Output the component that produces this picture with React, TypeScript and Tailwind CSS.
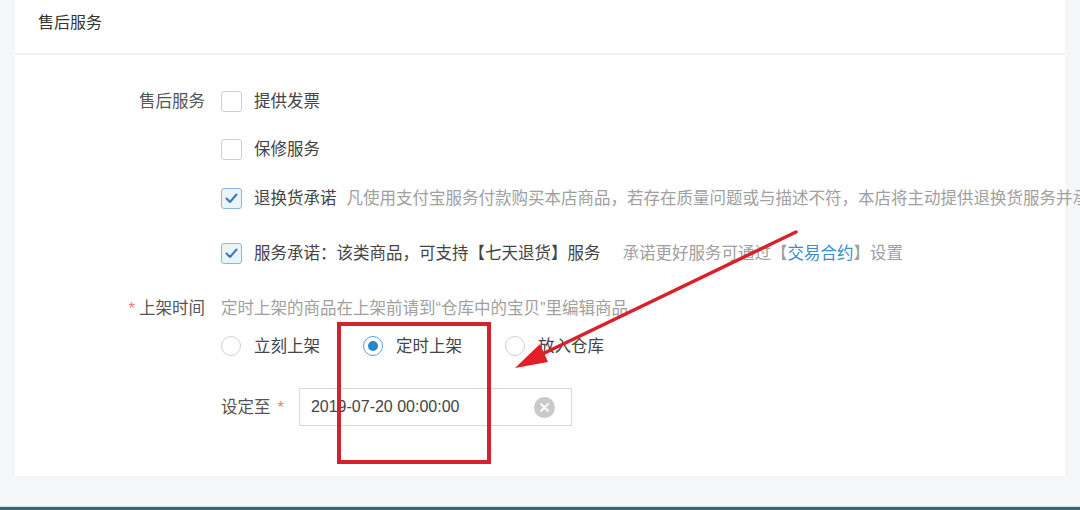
import React from 'react'

const font = { fontFamily: '"Liberation Sans", "Noto Sans CJK SC", sans-serif' }

function Checkbox({ checked }: { checked?: boolean }) {
  return checked ? (
    <span className="flex h-[21px] w-[21px] shrink-0 items-center justify-center rounded-[3px] border border-[#8fb6d9] bg-[#eaf4fb]">
      <svg width="13" height="11" viewBox="0 0 13 11" fill="none">
        <path d="M1.5 5.5 L5 9 L11.5 1.5" stroke="#3a78b5" strokeWidth="2" strokeLinecap="round" strokeLinejoin="round" />
      </svg>
    </span>
  ) : (
    <span className="h-[21px] w-[21px] shrink-0 rounded-[3px] border border-[#cfcfcf] bg-white" />
  )
}

function Radio({ checked, label }: { checked?: boolean; label: string }) {
  return (
    <label className="flex items-center gap-[13px]">
      {checked ? (
        <span className="flex h-[20px] w-[20px] items-center justify-center rounded-full border border-[#5c9fd8] bg-white">
          <span className="h-[10px] w-[10px] rounded-full bg-[#2a86cc]" />
        </span>
      ) : (
        <span className="h-[20px] w-[20px] rounded-full border border-[#d0d0d0] bg-white" />
      )}
      <span className="text-[#444]">{label}</span>
    </label>
  )
}

function CheckRow({ checked, label, children, h }: { checked?: boolean; label: string; children?: React.ReactNode; h: string }) {
  return (
    <div className={`flex items-center ${h}`}>
      <div className="w-[190px] shrink-0" />
      <div className="ml-[16px] flex items-center gap-[12px] whitespace-nowrap">
        <Checkbox checked={checked} />
        <span className="text-[#444]">{label}</span>
        {children}
      </div>
    </div>
  )
}

export default function App() {
  return (
    <div className="relative flex h-[510px] w-[1080px] flex-col overflow-hidden bg-[#f5f6f7] text-[16.5px]" style={font}>
      <div className="mx-[15px] flex h-[476px] flex-col bg-white">
        <div className="flex h-[53px] shrink-0 items-center pl-[23px] pb-[8px] text-[16px] text-[#333]">售后服务</div>
        <div className="h-[2px] bg-[#f0f0f0]" />

        <div className="flex flex-col pt-[22px]">
          <div className="flex h-[48px] items-center">
            <div className="w-[190px] shrink-0 text-right text-[#555]">售后服务</div>
            <div className="ml-[16px] flex items-center gap-[12px]">
              <Checkbox />
              <span className="text-[#444]">提供发票</span>
            </div>
          </div>
          <CheckRow h="h-[48px]" label="保修服务" />
          <CheckRow h="h-[50px]" checked label="退换货承诺">
            <span className="-ml-[2px] text-[#a0a0a0]">
              凡使用支付宝服务付款购买本店商品，若存在质量问题或与描述不符，本店将主动提供退换货服务并承担来回邮费
            </span>
          </CheckRow>
          <CheckRow h="h-[60px]" checked label="服务承诺：该类商品，可支持【七天退货】服务">
            <span className="ml-[10px] text-[#a0a0a0]">
              承诺更好服务可通过【<span className="text-[#3a8ccf]">交易合约</span>】设置
            </span>
          </CheckRow>

          <div className="mt-[5px] flex h-[40px] items-center">
            <div className="w-[190px] shrink-0 text-right text-[#555]">
              <span className="mr-[4px] text-[#f07b7b]">*</span>上架时间
            </div>
            <div className="ml-[16px] text-[#a0a0a0]">定时上架的商品在上架前请到“仓库中的宝贝”里编辑商品</div>
          </div>

          <div className="flex h-[36px] items-center">
            <div className="w-[190px] shrink-0" />
            <div className="ml-[16px] flex items-center gap-[43px]">
              <Radio label="立刻上架" />
              <Radio checked label="定时上架" />
              <Radio label="放入仓库" />
            </div>
          </div>

          <div className="mt-[24px] flex h-[38px] items-center">
            <div className="w-[190px] shrink-0" />
            <div className="ml-[16px] flex items-center">
              <span className="text-[#555]">设定至</span>
              <span className="ml-[7px] text-[#f07b7b]">*</span>
              <div className="ml-[15px] flex h-[38px] w-[273px] items-center justify-between border border-[#d8d8d8] pl-[11px] pr-[16px] text-[16px] text-[#444]">
                <span>2019-07-20 00:00:00</span>
                <span className="flex h-[21px] w-[21px] items-center justify-center rounded-full bg-[#c9c9c9]">
                  <svg width="9" height="9" viewBox="0 0 9 9">
                    <path d="M1 1 L8 8 M8 1 L1 8" stroke="#fff" strokeWidth="1.8" strokeLinecap="round" />
                  </svg>
                </span>
              </div>
            </div>
          </div>
        </div>
      </div>
      <div className="flex-1" />
      <div className="h-[1px] bg-[#bfe8ec]" />
      <div className="h-[3px] bg-[#3d6670]" />

      <svg className="pointer-events-none absolute left-0 top-0" width="1080" height="510" viewBox="0 0 1080 510">
        <rect x="339" y="324" width="150" height="138" fill="none" stroke="#d2222b" strokeWidth="4" />
        <line x1="796" y1="232" x2="530" y2="360" stroke="#d8222b" strokeWidth="3.5" strokeLinecap="round" />
        <polygon points="515,368 540,344 548,362" fill="#e01f28" />
      </svg>
    </div>
  )
}
